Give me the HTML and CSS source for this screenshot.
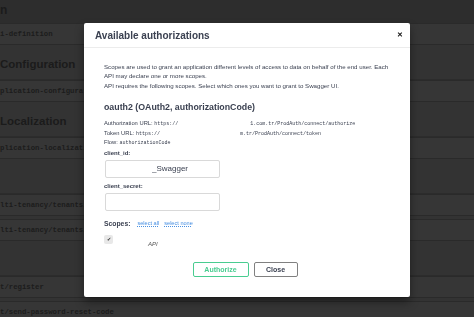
FILE: index.html
```html
<!DOCTYPE html>
<html lang="en">
<head>
    <meta charset="UTF-8">
    <title>Swagger UI - Available authorizations</title>
    <link rel="stylesheet" href="styles.css">
</head>
<body>
    <div class="page">
        <div class="topbar">n</div>
        <div class="op">i-definition</div>
        <h3 class="tag">Configuration</h3>
        <div class="op">plication-configuration</div>
        <h3 class="tag">Localization</h3>
        <div class="op">plication-localization</div>
        <h3 class="tag"></h3>
        <div class="op">lti-tenancy/tenants/find-by-name</div>
        <div class="op">lti-tenancy/tenants/find-by-id</div>
        <h3 class="tag"></h3>
        <div class="op">t/register</div>
        <div class="op">t/send-password-reset-code</div>
    </div>

    <div class="backdrop">
        <div class="modal">
            <div class="modal-header">
                <h3>Available authorizations</h3>
                <button class="close-x">&#x2715;</button>
            </div>
            <div class="modal-content">
                <p>Scopes are used to grant an application different levels of access to data on behalf of the end user. Each API may declare one or more scopes.</p>
                <p>API requires the following scopes. Select which ones you want to grant to Swagger UI.</p>

                <h4>oauth2 (OAuth2, authorizationCode)</h4>
                <p class="line">Authorization URL: <code>https://<span class="blur"></span>1.com.tr/ProdAuth/connect/authorize</code></p>
                <p class="line">Token URL: <code>https://<span class="blur short"></span>m.tr/ProdAuth/connect/token</code></p>
                <p class="line">Flow: <code>authorizationCode</code></p>

                <label class="field-label">client_id:</label>
                <input class="field" type="text" value="_Swagger">
                <label class="field-label">client_secret:</label>
                <input class="field" type="password" value="">

                <div class="scopes">
                    <span class="scopes-title">Scopes:</span>
                    <a href="#">select all</a>
                    <a href="#">select none</a>
                </div>
                <div class="scope">
                    <span class="check">&#x2714;</span>
                    <span class="scope-name">API</span>
                </div>

                <div class="buttons">
                    <button class="btn authorize">Authorize</button>
                    <button class="btn close">Close</button>
                </div>
            </div>
        </div>
    </div>
</body>
</html>
```

FILE: styles.css
```css
body {
    margin: 0;
    background: #333333;
    font-family: "Liberation Sans", Arial, sans-serif;
    overflow: hidden;
}
.page {
    width: 474px;
}
.topbar {
    height: 23px;
    line-height: 20px;
    background: #2d2d2d;
    font-size: 12px;
    font-weight: bold;
    color: #1b1b1b;
}
.op {
    height: 20px;
    line-height: 20px;
    background: #363636;
    border-top: 1px solid #2a2a2a;
    border-bottom: 1px solid #2a2a2a;
    font-family: "Liberation Mono", monospace;
    font-size: 7.3px;
    font-weight: bold;
    color: #1c1c1c;
    margin-bottom: 3px;
    white-space: nowrap;
}
.tag {
    margin: 0;
    height: 31px;
    line-height: 32px;
    font-size: 11.5px;
    font-weight: bold;
    color: #1b1b1b;
    border-bottom: 1px solid #2c2c2c;
}

.backdrop {
    position: fixed;
    top: 0;
    left: 0;
    right: 0;
    bottom: 0;
    padding: 23px 0 0 84px;
}
.modal {
    width: 326px;
    height: 274px;
    background: #fff;
    border-radius: 2px;
    box-shadow: 0 5px 10px rgba(0, 0, 0, 0.4);
    color: #3b4151;
}
.modal-header {
    display: flex;
    align-items: center;
    justify-content: space-between;
    height: 24px;
    padding: 0 7px 0 11px;
    border-bottom: 1px solid #ececec;
}
.modal-header h3 {
    margin: 0;
    font-size: 10px;
    font-weight: bold;
    color: #3b4151;
}
.close-x {
    border: none;
    background: none;
    padding: 0;
    font-size: 7px;
    font-weight: bold;
    color: #111;
}
.modal-content {
    padding: 14px 18px 0 20px;
}
.modal-content p {
    margin: 0 0 1px;
    font-size: 6.15px;
    line-height: 9px;
    color: #3b4151;
}
.modal-content h4 {
    margin: 12px 0 6px;
    font-size: 8.8px;
    line-height: 11px;
    font-weight: bold;
    color: #3b4151;
}
.modal-content p.line {
    margin: 0;
    line-height: 8.5px;
    font-size: 5.8px;
}
code {
    font-family: "Liberation Mono", monospace;
    font-size: 5px;
}
.blur {
    display: inline-block;
    width: 72px;
}
.blur.short {
    width: 80px;
}
.field-label {
    display: block;
    margin-top: 1px;
    font-size: 6px;
    line-height: 9px;
    font-weight: bold;
}
.field {
    display: block;
    box-sizing: border-box;
    width: 115px;
    height: 18px;
    margin: 2px 0 4px 1px;
    padding: 0 0 0 46px;
    border: 1px solid #d9d9d9;
    border-radius: 2px;
    font-family: "Liberation Sans", Arial, sans-serif;
    font-size: 8px;
    color: #3b4151;
}
.scopes {
    display: flex;
    align-items: center;
    gap: 5px;
    margin-top: 8px;
    height: 9px;
}
.scopes-title {
    font-size: 6.8px;
    font-weight: bold;
    margin-right: 2px;
}
.scopes a {
    font-size: 5.6px;
    color: #4990e2;
    text-decoration: underline dotted;
}
.scope {
    display: flex;
    align-items: flex-start;
    margin-top: 7px;
    height: 12px;
}
.check {
    width: 9px;
    height: 9px;
    background: #e8e8e8;
    border-radius: 2px;
    font-size: 5px;
    line-height: 9px;
    text-align: center;
    color: #333;
}
.scope-name {
    margin: 6px 0 0 35px;
    font-size: 6px;
    font-style: italic;
    color: #555;
}
.buttons {
    display: flex;
    justify-content: center;
    gap: 5px;
    margin-top: 15px;
    padding-right: 6px;
}
.btn {
    height: 15px;
    padding: 0;
    background: #fff;
    border-radius: 2px;
    font-family: "Liberation Sans", Arial, sans-serif;
    font-size: 7px;
    font-weight: bold;
}
.authorize {
    width: 56px;
    border: 1px solid #49cc90;
    color: #49cc90;
}
.close {
    width: 44px;
    border: 1px solid #808080;
    color: #3b4151;
}
```
